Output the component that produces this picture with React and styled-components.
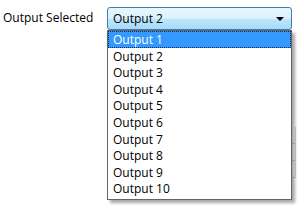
import React, { useState } from 'react'
import styled, { createGlobalStyle } from 'styled-components'

const GlobalStyle = createGlobalStyle`
  body {
    margin: 0;
    background: #fff;
    font-family: 'Open Sans', 'Noto Sans', sans-serif;
    color: #000;
  }
`

const outputs = Array.from({ length: 10 }, (_, i) => `Output ${i + 1}`)

const App = () => {
  const [selected] = useState('Output 2')
  const [hovered] = useState('Output 1')

  return (
    <Page>
      <GlobalStyle />
      <Row>
        <Label>Output Selected</Label>
        <SelectWrap>
          <SelectBox>
            <span>{selected}</span>
            <Arrow />
          </SelectBox>
          <List>
            {outputs.map((o) => (
              <Item key={o} active={o === hovered}>
                {o}
              </Item>
            ))}
          </List>
        </SelectWrap>
      </Row>
      <Grid>
        {[0, 1, 2].map((r) => (
          <GridRow key={r} />
        ))}
      </Grid>
    </Page>
  )
}

const Page = styled.div`
  width: 304px;
  height: 209px;
  overflow: hidden;
`

const Row = styled.div`
  display: flex;
  align-items: flex-start;
  padding: 7px 0 0 3px;
`

const Label = styled.div`
  width: 104px;
  font-size: 12px;
  line-height: 22px;
`

const SelectWrap = styled.div`
  position: relative;
  width: 185px;
  z-index: 2;
`

const SelectBox = styled.div`
  box-sizing: border-box;
  height: 23px;
  border: 1px solid #3c7fb1;
  border-radius: 3px;
  background: linear-gradient(#eaf6fd 0%, #d9f0fc 50%, #bee6fd 51%, #a7d9f5 100%);
  display: flex;
  align-items: center;
  justify-content: space-between;
  padding: 0 7px 0 5px;
  font-size: 12px;
`

const Arrow = styled.span`
  width: 0;
  height: 0;
  border-left: 4px solid transparent;
  border-right: 4px solid transparent;
  border-top: 4px solid #000;
`

const List = styled.div`
  position: absolute;
  top: 23px;
  left: 0;
  width: 185px;
  box-sizing: border-box;
  background: #fff;
  border: 1px solid #646464;
  padding: 0 0 2px;
  box-shadow: 3px 3px 3px rgba(0, 0, 0, 0.35);
`

const Item = styled.div`
  box-sizing: border-box;
  height: 16.6px;
  line-height: 15px;
  padding-left: 4px;
  font-size: 12px;
  background: ${(p) => (p.active ? '#3399ff' : 'transparent')};
  color: ${(p) => (p.active ? '#fff' : '#000')};
  border: 1px dotted ${(p) => (p.active ? '#0a2a55' : 'transparent')};
`

const Grid = styled.div`
  margin: 97px 0 0 120px;
  width: 176px;
`

const GridRow = styled.div`
  height: 16px;
  border-bottom: 1px solid #d4d4d4;
  border-right: 1px solid #d4d4d4;
`

export default App
